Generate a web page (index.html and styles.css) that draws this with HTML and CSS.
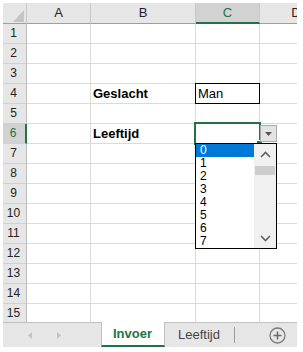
FILE: index.html
```html
<!DOCTYPE html>
<html lang="nl">

<head>
    <meta charset="UTF-8">
    <title>Invoer</title>
    <link rel="stylesheet" href="styles.css">
</head>

<body>
    <div class="workbook">
        <div class="sheet">
            <div class="cell corner">
                <svg width="11" height="12" viewBox="0 0 11 12"><path d="M11 0V12H0Z" fill="#c4c4c4"/></svg>
            </div>
            <div class="cell col-head">A</div>
            <div class="cell col-head">B</div>
            <div class="cell col-head selected">C</div>
            <div class="cell col-head last">D</div>

            <div class="cell row-head">1</div><div class="cell"></div><div class="cell"></div><div class="cell"></div><div class="cell"></div>
            <div class="cell row-head">2</div><div class="cell"></div><div class="cell"></div><div class="cell"></div><div class="cell"></div>
            <div class="cell row-head">3</div><div class="cell"></div><div class="cell"></div><div class="cell"></div><div class="cell"></div>
            <div class="cell row-head">4</div><div class="cell"></div>
            <div class="cell label">Geslacht</div>
            <div class="cell boxed">Man</div>
            <div class="cell"></div>
            <div class="cell row-head">5</div><div class="cell"></div><div class="cell"></div><div class="cell"></div><div class="cell"></div>
            <div class="cell row-head selected">6</div><div class="cell"></div>
            <div class="cell label">Leeftijd</div>
            <div class="cell active">
                <!-- selection, dropdown button and list lie over the grid -->
                <div class="selection"><span class="handle"></span></div>
                <div class="drop-btn">
                    <svg width="7" height="4" viewBox="0 0 7 4"><path d="M0 0H7L3.5 4Z" fill="#555"/></svg>
                </div>
                <div class="drop-list">
                    <ul class="options">
                        <li class="picked">0</li>
                        <li>1</li>
                        <li>2</li>
                        <li>3</li>
                        <li>4</li>
                        <li>5</li>
                        <li>6</li>
                        <li>7</li>
                    </ul>
                    <div class="scrollbar">
                        <div class="arrow">
                            <svg width="11" height="7" viewBox="0 0 11 7"><path d="M1 6L5.5 1.5L10 6" fill="none" stroke="#606060" stroke-width="1.6"/></svg>
                        </div>
                        <div class="thumb"></div>
                        <div class="track"></div>
                        <div class="arrow">
                            <svg width="11" height="7" viewBox="0 0 11 7"><path d="M1 1L5.5 5.5L10 1" fill="none" stroke="#606060" stroke-width="1.6"/></svg>
                        </div>
                    </div>
                </div>
            </div>
            <div class="cell"></div>
            <div class="cell row-head">7</div><div class="cell"></div><div class="cell"></div><div class="cell"></div><div class="cell"></div>
            <div class="cell row-head">8</div><div class="cell"></div><div class="cell"></div><div class="cell"></div><div class="cell"></div>
            <div class="cell row-head">9</div><div class="cell"></div><div class="cell"></div><div class="cell"></div><div class="cell"></div>
            <div class="cell row-head">10</div><div class="cell"></div><div class="cell"></div><div class="cell"></div><div class="cell"></div>
            <div class="cell row-head">11</div><div class="cell"></div><div class="cell"></div><div class="cell"></div><div class="cell"></div>
            <div class="cell row-head">12</div><div class="cell"></div><div class="cell"></div><div class="cell"></div><div class="cell"></div>
            <div class="cell row-head">13</div><div class="cell"></div><div class="cell"></div><div class="cell"></div><div class="cell"></div>
            <div class="cell row-head">14</div><div class="cell"></div><div class="cell"></div><div class="cell"></div><div class="cell"></div>
            <div class="cell row-head">15</div><div class="cell"></div><div class="cell"></div><div class="cell"></div><div class="cell"></div>
        </div>

        <div class="tabs">
            <div class="tab-nav">
                <svg width="4" height="7" viewBox="0 0 4 7"><path d="M4 0V7L0 3.5Z" fill="#c3c3c3"/></svg>
                <svg width="4" height="7" viewBox="0 0 4 7"><path d="M0 0V7L4 3.5Z" fill="#c3c3c3"/></svg>
            </div>
            <div class="tab current">Invoer</div>
            <div class="tab">Leeftijd</div>
            <span class="tab-sep"></span>
            <div class="add-sheet">
                <svg width="17" height="17" viewBox="0 0 17 17">
                    <circle cx="8.5" cy="8.5" r="7.5" fill="none" stroke="#7a7a7a" stroke-width="1.3"/>
                    <path d="M8.5 4.5V12.5M4.5 8.5H12.5" stroke="#6a6a6a" stroke-width="1.5"/>
                </svg>
            </div>
        </div>
    </div>
</body>

</html>
```

FILE: styles.css
```css
body {
    margin: 0;
    background-color: #fff;
    font-family: "Liberation Sans", Arial, sans-serif;
}

.workbook {
    width: 294px;
    padding: 3px 0 0 3px;
}

.sheet {
    display: grid;
    grid-template-columns: 24px 64px 105px 64px 72px;
    grid-template-rows: 21px;
    grid-auto-rows: 20px;
    width: 294px;
    height: 319px;
    overflow: hidden;
}

.cell {
    box-sizing: border-box;
    border-right: 1px solid #dadada;
    border-bottom: 1px solid #dadada;
    padding-left: 2px;
    font-size: 13px;
    line-height: 19px;
    color: #000;
    white-space: nowrap;
}

.corner {
    display: flex;
    align-items: flex-end;
    justify-content: flex-end;
    padding: 0 2px 1px 0;
    background-color: #e6e6e6;
    border-right: 1px solid #c8c8c8;
    border-bottom: 1px solid #9e9e9e;
}

.col-head {
    padding: 0;
    background-color: #e6e6e6;
    border-right: 1px solid #c8c8c8;
    border-bottom: 1px solid #9e9e9e;
    text-align: center;
    line-height: 20px;
    color: #222;
}

.col-head.selected {
    background-color: #d2d2d2;
    border-bottom: 2px solid #217346;
    line-height: 19px;
    color: #217346;
}

.col-head.last {
    border-right: none;
}

.row-head {
    padding: 0 2px 0 0;
    background-color: #e6e6e6;
    border-right: 1px solid #bdbdbd;
    border-bottom: 1px solid #d0d0d0;
    text-align: center;
    font-size: 12px;
    color: #222;
}

.row-head.selected {
    background-color: #d2d2d2;
    border-right: 2px solid #217346;
    color: #217346;
}

.label {
    font-weight: bold;
}

.boxed {
    position: relative;
}

.boxed::after {
    content: "";
    position: absolute;
    inset: -1px;
    border: 1px solid #000;
}

.active {
    position: relative;
    z-index: 2;
}

.selection {
    position: absolute;
    top: -2px;
    left: -2px;
    right: -2px;
    bottom: -2px;
    border: 2px solid #217346;
}

.handle {
    position: absolute;
    right: -4px;
    bottom: -4px;
    width: 5px;
    height: 5px;
    background-color: #217346;
    border: 1px solid #fff;
}

.drop-btn {
    position: absolute;
    top: 1px;
    left: 64px;
    box-sizing: border-box;
    width: 17px;
    height: 17px;
    display: flex;
    align-items: center;
    justify-content: center;
    background-color: #e3e3e3;
    border: 1px solid #a9a9a9;
}

.drop-list {
    position: absolute;
    top: 19px;
    left: -1px;
    box-sizing: border-box;
    width: 82px;
    height: 106px;
    display: flex;
    background-color: #fff;
    border: 1px solid #000;
}

.options {
    flex: 1;
    margin: 0;
    padding: 0;
    list-style: none;
}

.options li {
    height: 13px;
    padding-left: 4px;
    font-size: 12px;
    line-height: 13px;
    color: #000;
}

.options li.picked {
    background-color: #0078d7;
    color: #fff;
}

.scrollbar {
    width: 22px;
    display: flex;
    flex-direction: column;
    background-color: #f0f0f0;
}

.arrow {
    height: 20px;
    display: flex;
    align-items: center;
    justify-content: center;
}

.thumb {
    height: 9px;
    margin: 2px 1px 0;
    background-color: #cdcdcd;
}

.track {
    flex: 1;
}

.tabs {
    display: flex;
    align-items: center;
    box-sizing: border-box;
    width: 294px;
    height: 25px;
    background-color: #e6e6e6;
    border-top: 1px solid #c0c0c0;
    font-size: 13px;
}

.tab-nav {
    width: 98px;
    display: flex;
    align-items: center;
    gap: 25px;
    padding-left: 25px;
    box-sizing: border-box;
}

.tab {
    height: 24px;
    line-height: 23px;
    padding: 0 13px;
    color: #444;
    box-sizing: border-box;
}

.tab.current {
    align-self: flex-start;
    height: 25px;
    width: 64px;
    margin-top: -1px;
    padding: 0 0 0 11px;
    line-height: 24px;
    background-color: #fff;
    border-left: 1px solid #c0c0c0;
    border-right: 1px solid #c0c0c0;
    border-bottom: 2px solid #217346;
    font-weight: bold;
    color: #217346;
}

.tab-sep {
    width: 1px;
    height: 16px;
    margin-left: 1px;
    background-color: #9a9a9a;
}

.add-sheet {
    display: flex;
    margin-left: auto;
    margin-right: 11px;
}
```
